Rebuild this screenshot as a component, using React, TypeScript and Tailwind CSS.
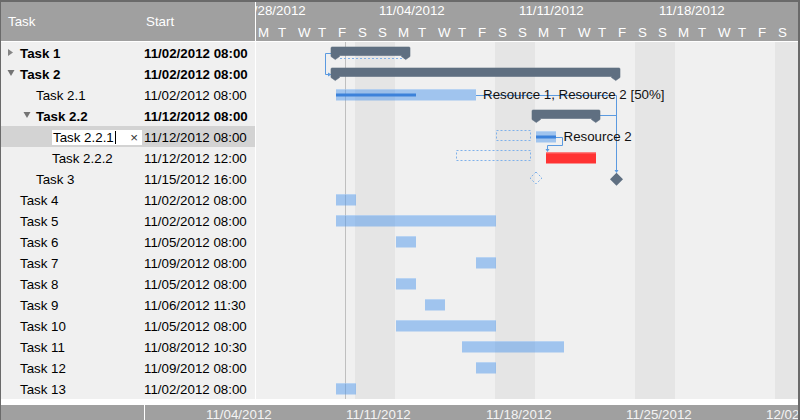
import React from 'react'

type Row = {
  name: string
  start: string
  level: 0 | 1 | 2
  bold?: boolean
  toggle?: 'open' | 'closed'
  editing?: boolean
}

const rows: Row[] = [
  { name: 'Task 1', start: '11/02/2012 08:00', level: 0, bold: true, toggle: 'closed' },
  { name: 'Task 2', start: '11/02/2012 08:00', level: 0, bold: true, toggle: 'open' },
  { name: 'Task 2.1', start: '11/02/2012 08:00', level: 1 },
  { name: 'Task 2.2', start: '11/12/2012 08:00', level: 1, bold: true, toggle: 'open' },
  { name: 'Task 2.2.1', start: '11/12/2012 08:00', level: 2, editing: true },
  { name: 'Task 2.2.2', start: '11/12/2012 12:00', level: 2 },
  { name: 'Task 3', start: '11/15/2012 16:00', level: 1 },
  { name: 'Task 4', start: '11/02/2012 08:00', level: 0 },
  { name: 'Task 5', start: '11/02/2012 08:00', level: 0 },
  { name: 'Task 6', start: '11/05/2012 08:00', level: 0 },
  { name: 'Task 7', start: '11/09/2012 08:00', level: 0 },
  { name: 'Task 8', start: '11/05/2012 08:00', level: 0 },
  { name: 'Task 9', start: '11/06/2012 11:30', level: 0 },
  { name: 'Task 10', start: '11/05/2012 08:00', level: 0 },
  { name: 'Task 11', start: '11/08/2012 10:30', level: 0 },
  { name: 'Task 12', start: '11/09/2012 08:00', level: 0 },
  { name: 'Task 13', start: '11/02/2012 08:00', level: 0 },
]

const indent = ['pl-[6px]', 'pl-[22px]', 'pl-[38px]']

const DAY_LETTERS = ['M', 'T', 'W', 'T', 'F', 'S', 'S']
const days = Array.from({ length: 28 }, (_, i) => ({
  letter: DAY_LETTERS[i % 7],
  weekend: i % 7 === 5 || i % 7 === 6,
}))

const weeks = ['10/28/2012', '11/04/2012', '11/11/2012', '11/18/2012', '11/25/2012']
const footerWeeks = ['11/04/2012', '11/11/2012', '11/18/2012', '11/25/2012', '12/02/2012']

const ROW_H = 21
const CHART_W = 543
const BODY_H = 357

// chart x coords are relative to the chart's left edge, one day = 20px
const bars = [
  { row: 2, x0: 81, x1: 221, progress: 161 },
  { row: 4, x0: 281, x1: 301, progress: 301 },
  { row: 7, x0: 81, x1: 101 },
  { row: 8, x0: 81, x1: 241 },
  { row: 9, x0: 141, x1: 161 },
  { row: 10, x0: 221, x1: 241 },
  { row: 11, x0: 141, x1: 161 },
  { row: 12, x0: 170, x1: 190 },
  { row: 13, x0: 141, x1: 241 },
  { row: 14, x0: 207, x1: 309 },
  { row: 15, x0: 221, x1: 241 },
  { row: 16, x0: 81, x1: 101 },
]

const summaries = [
  { row: 0, x0: 76, x1: 155 },
  { row: 1, x0: 76, x1: 365 },
  { row: 3, x0: 277, x1: 345 },
]

function summaryPath(x0: number, x1: number, y: number) {
  const c = 8.5
  return `M${x0} ${y + 1} Q${x0} ${y} ${x0 + 1} ${y} H${x1 - 1} Q${x1} ${y} ${x1} ${y + 1} V${y + 9.5} L${x1 - c / 2} ${y + 12.5} L${x1 - c} ${y + 9.5} V${y + 8.5} H${x0 + c} V${y + 9.5} L${x0 + c / 2} ${y + 12.5} L${x0} ${y + 9.5} Z`
}

function Toggle({ state }: { state?: 'open' | 'closed' }) {
  return (
    <svg width="13" height="21" viewBox="0 0 13 21" className="shrink-0 -mt-[2px]">
      {state === 'closed' && <path d="M1 7 L6 10.5 L1 14 Z" fill="#858585" />}
      {state === 'open' && <path d="M0.5 7 L7.5 7 L4 13 Z" fill="#747474" />}
    </svg>
  )
}

function GridRow({ row }: { row: Row }) {
  const weight = row.bold ? 'font-bold' : 'font-normal'
  return (
    <div
      className={`flex h-[21px] items-center pt-[2px] text-black ${row.editing ? 'bg-[#d3d3d3]' : ''}`}
    >
      {row.editing ? (
        <div className="w-[143px] shrink-0 pl-[51px]">
          <div className="flex h-[15px] w-[90px] items-center bg-white pl-px">
            <span>{row.name}</span>
            <span className="ml-px h-[13px] w-px bg-black" />
            <span className="ml-auto pr-[4px] text-[#333]">×</span>
          </div>
        </div>
      ) : (
        <div className={`flex w-[143px] shrink-0 items-center ${indent[row.level]} ${weight}`}>
          <Toggle state={row.toggle} />
          <span>{row.name}</span>
        </div>
      )}
      <div className={`${weight} whitespace-nowrap`}>{row.start}</div>
    </div>
  )
}

function ChartDrawing() {
  const line = '#5b9ae0'
  const dash = '#7fb1ea'
  return (
    <svg width={CHART_W} height={BODY_H} className="absolute left-0 top-0">
      {/* today */}
      <line x1="90.5" y1="0" x2="90.5" y2={BODY_H} stroke="#bfbfbf" />

      {/* baselines */}
      <line x1="85" y1="16.5" x2="150" y2="16.5" stroke={dash} strokeDasharray="2 2" />
      <rect x="241.5" y="88.5" width="34" height="10" fill="none" stroke={dash} strokeDasharray="2 2" />
      <rect x="201.5" y="108.5" width="74" height="10" fill="none" stroke={dash} strokeDasharray="2 2" />
      <path d="M281 130 L287 136 L281 142 L275 136 Z" fill="none" stroke={dash} strokeDasharray="2 2" />

      {/* dependencies */}
      <g stroke={line} fill="none">
        <path d="M76 11.5 H70.5 V32.5 H74" />
        <path d="M221 53.5 H361.5 V129" />
        <path d="M345 73.5 H361.5" />
        <path d="M301 95.5 H307.5 V103.5 H292.5 V108" />
      </g>
      <g fill={line}>
        <path d="M73 30.5 L76.5 32.5 L73 34.5 Z" />
        <path d="M359.5 128 L361.5 131 L363.5 128 Z" />
        <path d="M290.5 107 L292.5 110 L294.5 107 Z" />
      </g>

      {/* summaries */}
      {summaries.map((s) => (
        <path
          key={s.row}
          d={summaryPath(s.x0, s.x1, s.row * ROW_H + 5)}
          fill="#5f6f81"
          stroke="#5f6f81"
          strokeWidth="0.6"
          strokeLinejoin="round"
        />
      ))}

      {/* tasks */}
      {bars.map((b) => {
        const y = b.row * ROW_H + 5
        return (
          <g key={b.row}>
            <rect x={b.x0} y={y} width={b.x1 - b.x0} height="11.5" fill="rgba(80,152,236,0.5)" />
            <rect x={b.x0} y={y} width={b.x1 - b.x0} height="1" fill="rgba(255,255,255,0.25)" />
            {b.progress && (
              <rect x={b.x0} y={y + 4.5} width={b.progress - b.x0} height="3" fill="#3c82da" />
            )}
          </g>
        )
      })}

      {/* Task 2.2.2 (late) */}
      <rect x="291" y="110.5" width="50" height="11" fill="#ff3333" />
      <rect x="291" y="110.5" width="50" height="1" fill="#ff7070" />

      {/* milestone Task 3 */}
      <path d="M361.5 130.8 L368 137.3 L361.5 143.8 L355 137.3 Z" fill="#5f6f81" />

      {/* labels */}
      <text x="228" y="57.3" fill="#111">Resource 1, Resource 2 [50%]</text>
      <text x="308.5" y="99" fill="#111">Resource 2</text>
    </svg>
  )
}

export default function App() {
  return (
    <div className="h-[420px] w-[800px] overflow-hidden bg-[#6a6a6a] pl-px pr-[2px] pt-[2px] font-['Liberation_Sans',Arial,sans-serif] text-[13.33px] leading-[15px]">
      <div className="flex h-full flex-col bg-white">
        {/* header */}
        <div className="flex h-[40px] shrink-0 border-b border-white bg-[#a0a0a0] text-white">
          <div className="flex w-[254px] shrink-0 items-center">
            <div className="w-[143px] shrink-0 pl-[7px]">Task</div>
            <div className="pl-[2px]">Start</div>
          </div>
          <div className="relative flex-1 overflow-hidden">
            <div className="-ml-[20px] flex h-[20px] pt-px">
              {weeks.map((w) => (
                <div key={w} className="w-[140px] shrink-0 pl-[4px]">
                  {w}
                </div>
              ))}
            </div>
            <div className="flex h-[19px] pt-[2.5px]">
              {days.map((d, i) => (
                <div key={i} className="w-[20px] shrink-0 pl-[3px]">
                  {d.letter}
                </div>
              ))}
            </div>
            <div className="absolute bottom-0 left-0 top-0 w-px bg-white" />
          </div>
        </div>

        {/* body */}
        <div className="flex h-[357px] shrink-0">
          <div className="w-[254px] shrink-0 bg-[#f0f0f0]">
            {rows.map((r) => (
              <GridRow key={r.name} row={r} />
            ))}
          </div>
          <div className="relative flex-1 overflow-hidden bg-[#f0f0f0]">
            <div className="flex h-full">
              {days.map((d, i) => (
                <div
                  key={i}
                  className={`h-full w-[20px] shrink-0 ${d.weekend ? 'bg-[#e5e5e5]' : ''}`}
                />
              ))}
            </div>
            <ChartDrawing />
            <div className="absolute bottom-0 left-0 top-0 w-px bg-white" />
          </div>
        </div>

        <div className="h-[6px] shrink-0 bg-white" />

        {/* footer timescale */}
        <div className="flex flex-1 bg-[#a0a0a0] text-[#f4f4f4]">
          <div className="w-[143px] shrink-0" />
          <div className="w-px shrink-0 bg-white" />
          <div className="flex flex-1 overflow-hidden pl-[61px] pt-[2px]">
            {footerWeeks.map((w) => (
              <div key={w} className="w-[140px] shrink-0">
                {w}
              </div>
            ))}
          </div>
        </div>
      </div>
    </div>
  )
}
